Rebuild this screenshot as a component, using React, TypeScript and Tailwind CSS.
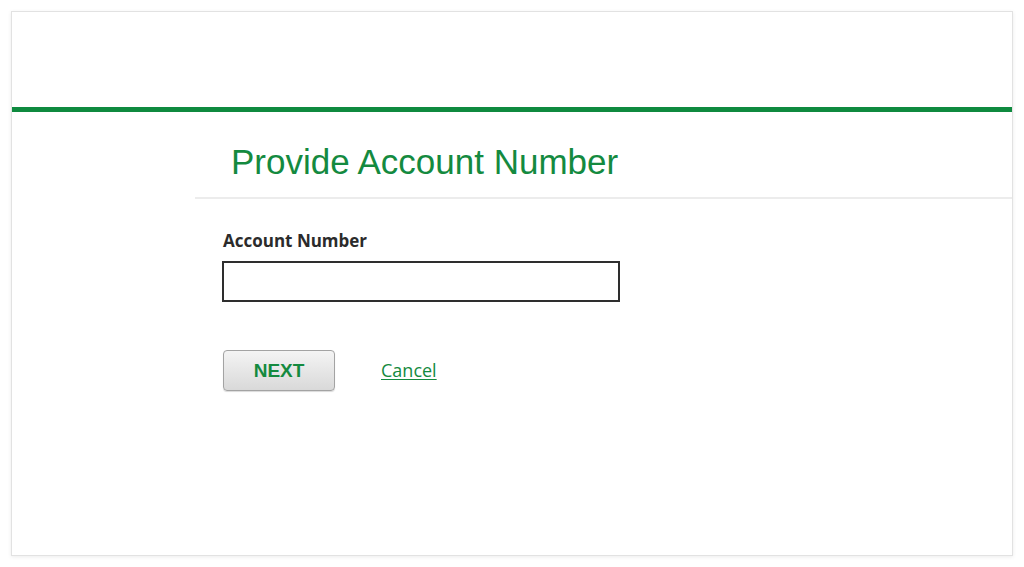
export default function App() {
  return (
    <div className="min-h-screen bg-white p-[11px]">
      <div className="h-[545px] border border-[#e2e2e2] bg-white shadow-[0_1px_4px_rgba(0,0,0,0.08)] flex flex-col">
        <div className="h-[95px]" />
        <div className="h-[5px] bg-[#0f8a3f]" />
        <div className="pl-[183px] pt-[31px]">
          <div className="border-b-2 border-[#ececec] pb-[16px] pl-[36px]">
            <h1 className="font-['Liberation_Sans',Arial,sans-serif] text-[35px] leading-[38px] text-[#148a3f]">
              Provide Account Number
            </h1>
          </div>
          <div className="pl-[27px] pt-[31px]">
            <label className="block font-['Open_Sans',sans-serif] text-[17px] font-bold leading-[22px] text-[#2b2b2b] pl-[1px]">
              Account Number
            </label>
            <input
              type="text"
              className="mt-[9px] block h-[41px] w-[398px] border-2 border-[#2e2e2e] bg-white outline-none"
            />
            <div className="mt-[48px] flex items-center">
              <button className="ml-[1px] h-[41px] w-[112px] rounded-[4px] border border-[#a3a3a3] bg-gradient-to-b from-[#f4f4f4] to-[#d9d9d9] pt-[2px] font-['Liberation_Sans',Arial,sans-serif] text-[19px] font-bold text-[#148a3f] shadow-[0_1px_1px_rgba(0,0,0,0.15)]">
                NEXT
              </button>
              <a
                href="#"
                className="ml-[46px] font-['Open_Sans',sans-serif] text-[18px] text-[#148a3f] underline underline-offset-2"
              >
                Cancel
              </a>
            </div>
          </div>
        </div>
      </div>
    </div>
  );
}
